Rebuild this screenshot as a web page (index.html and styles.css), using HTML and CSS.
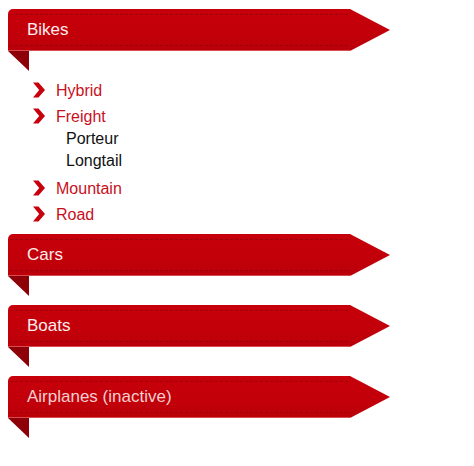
FILE: index.html
```html
<!DOCTYPE html>
<html>
<head>
<meta charset="utf-8">
<link rel="stylesheet" href="styles.css">
</head>
<body>
<div class="menu">
  <div class="section">
    <div class="bar"><span class="title">Bikes</span></div>
    <div class="fold"></div>
    <ul class="items">
      <li class="item"><svg class="chev" width="12" height="16" viewBox="0 0 12 16"><polygon points="0,0.5 5.5,0.5 12,8 5.5,15.5 0,15.5 6.2,8"/></svg><span class="label">Hybrid</span></li>
      <li class="item"><svg class="chev" width="12" height="16" viewBox="0 0 12 16"><polygon points="0,0.5 5.5,0.5 12,8 5.5,15.5 0,15.5 6.2,8"/></svg><span class="label">Freight</span>
        <ul class="sub">
          <li class="subitem">Porteur</li>
          <li class="subitem">Longtail</li>
        </ul>
      </li>
      <li class="item"><svg class="chev" width="12" height="16" viewBox="0 0 12 16"><polygon points="0,0.5 5.5,0.5 12,8 5.5,15.5 0,15.5 6.2,8"/></svg><span class="label">Mountain</span></li>
      <li class="item"><svg class="chev" width="12" height="16" viewBox="0 0 12 16"><polygon points="0,0.5 5.5,0.5 12,8 5.5,15.5 0,15.5 6.2,8"/></svg><span class="label">Road</span></li>
    </ul>
  </div>
  <div class="section">
    <div class="bar"><span class="title">Cars</span></div>
    <div class="fold"></div>
  </div>
  <div class="section">
    <div class="bar"><span class="title">Boats</span></div>
    <div class="fold"></div>
  </div>
  <div class="section">
    <div class="bar"><span class="title inactive">Airplanes (inactive)</span></div>
    <div class="fold"></div>
  </div>
</div>
</body>
</html>
```
FILE: styles.css
```css
html, body {
  margin: 0;
  padding: 0;
  background: #ffffff;
}
body {
  padding: 9px 8px;
  font-family: "Liberation Sans", Arial, sans-serif;
  font-size: 16px;
}
.menu {
  display: flex;
  flex-direction: column;
  gap: 9px;
}
.section {
  display: flex;
  flex-direction: column;
}
.bar {
  position: relative;
  width: 382px;
  height: 42px;
  background: linear-gradient(#c6000b, #c2000a 60%, #ba0009);
  border-top-left-radius: 5px;
  clip-path: polygon(0 0, 342px 0, 100% 50%, 342px 100%, 0 100%);
  display: flex;
  align-items: center;
}
.bar::before {
  content: "";
  position: absolute;
  left: 2px;
  right: 42px;
  top: 5px;
  bottom: 5px;
  border-top: 1px dashed rgba(150, 0, 10, 0.8);
  border-bottom: 1px dashed rgba(150, 0, 10, 0.8);
}
.bar::after {
  content: "";
  position: absolute;
  left: 0;
  right: 0;
  bottom: 0;
  height: 1px;
  background: rgba(235, 130, 130, 0.6);
}
.title {
  position: relative;
  padding-left: 19px;
  color: #fdeeee;
  font-size: 17px;
  line-height: 42px;
}
.title.inactive {
  color: #f4cfcf;
}
.fold {
  width: 21px;
  height: 20px;
  background: #8e0008;
  clip-path: polygon(0 0, 100% 0, 100% 100%);
}
.items {
  list-style: none;
  margin: 7px 0 -3px 0;
  padding: 0;
}
.item {
  padding: 2px 0;
  line-height: 22px;
  color: #c8101c;
}
.chev {
  display: inline-block;
  vertical-align: top;
  margin: 2px 11px 0 25px;
  fill: #c8000e;
}
.label {
  vertical-align: top;
}
.sub {
  list-style: none;
  margin: 0 0 2px 0;
  padding: 0 0 0 58px;
}
.subitem {
  color: #111111;
  line-height: 22px;
}
```
